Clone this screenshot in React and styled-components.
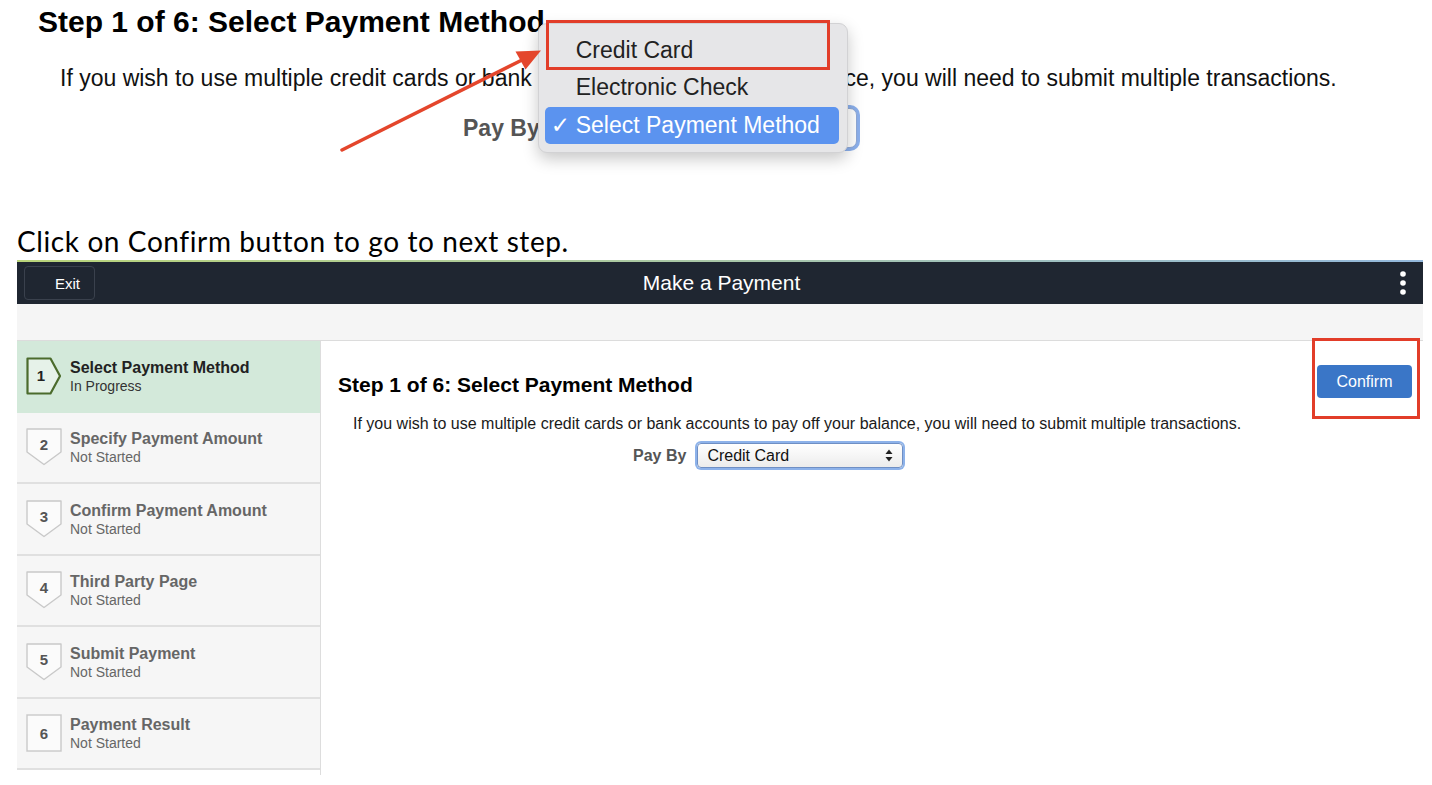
import React from 'react'
import styled, { createGlobalStyle } from 'styled-components'

const GlobalStyle = createGlobalStyle`
  html, body {
    margin: 0;
    padding: 0;
    background: #ffffff;
  }
  body {
    font-family: "Liberation Sans", Arial, sans-serif;
    color: #111;
  }
  * {
    box-sizing: border-box;
  }
`

const steps = [
  { n: 1, title: 'Select Payment Method', status: 'In Progress', kind: 'active' },
  { n: 2, title: 'Specify Payment Amount', status: 'Not Started', kind: 'down' },
  { n: 3, title: 'Confirm Payment Amount', status: 'Not Started', kind: 'down' },
  { n: 4, title: 'Third Party Page', status: 'Not Started', kind: 'down' },
  { n: 5, title: 'Submit Payment', status: 'Not Started', kind: 'down' },
  { n: 6, title: 'Payment Result', status: 'Not Started', kind: 'square' },
]

const menuItems = ['Credit Card', 'Electronic Check', 'Select Payment Method']

function BadgeShape({ kind }) {
  if (kind === 'active') {
    return (
      <svg width="36" height="38" viewBox="0 0 36 38">
        <path d="M1.5 1.5 H24.5 L34 19 L24.5 36.5 H1.5 Z" fill="#e6f2e9" stroke="#4b6b2c" strokeWidth="2.2" strokeLinejoin="round" />
      </svg>
    )
  }
  if (kind === 'down') {
    return (
      <svg width="36" height="38" viewBox="0 0 36 38">
        <path d="M1 1 H35 V24 L18 36.5 L1 24 Z" fill="#fbfbfb" stroke="#c9c9c9" strokeWidth="1.4" strokeLinejoin="round" />
      </svg>
    )
  }
  return (
    <svg width="36" height="38" viewBox="0 0 36 38">
      <rect x="1" y="1" width="34" height="36" fill="#fbfbfb" stroke="#c9c9c9" strokeWidth="1.4" />
    </svg>
  )
}

function Kebab() {
  return (
    <svg width="8" height="26" viewBox="0 0 8 26">
      <circle cx="4" cy="4" r="2.8" fill="#fff" />
      <circle cx="4" cy="13" r="2.8" fill="#fff" />
      <circle cx="4" cy="22" r="2.8" fill="#fff" />
    </svg>
  )
}

function UpDown() {
  return (
    <svg width="8" height="13" viewBox="0 0 8 13">
      <path d="M4 0.5 L7.5 5 H0.5 Z" fill="#222" />
      <path d="M4 12.5 L7.5 8 H0.5 Z" fill="#222" />
    </svg>
  )
}

function Arrow() {
  return (
    <ArrowSvg width="1432" height="224" viewBox="0 0 1432 224">
      <line x1="342" y1="150" x2="522" y2="60" stroke="#e4462c" strokeWidth="3.5" strokeLinecap="round" />
      <polygon points="541,50.5 525.5,69.5 515.5,51.5" fill="#e4462c" />
    </ArrowSvg>
  )
}

export default function App() {
  return (
    <Page>
      <GlobalStyle />
      <TopShot>
        <BigHeading>Step 1 of 6: Select Payment Method</BigHeading>
        <BigPara>
          If you wish to use multiple credit cards or bank accounts to pay off your balance, you will need to submit multiple transactions.
        </BigPara>
        <BigPayRow>
          <BigLabel>Pay By</BigLabel>
          <SelectWrap>
            <BigSelect />
            <Menu>
              {menuItems.map((item, i) => (
                <MenuItem key={item} $selected={i === 2}>
                  <Check>{i === 2 ? '✓' : ''}</Check>
                  {item}
                </MenuItem>
              ))}
              <Highlight />
            </Menu>
          </SelectWrap>
        </BigPayRow>
        <Arrow />
      </TopShot>

      <Caption>Click on Confirm button to go to next step.</Caption>

      <Shot>
        <AccentLine />
        <Header>
          <ExitButton>Exit</ExitButton>
          <HeaderTitle>Make a Payment</HeaderTitle>
          <HeaderRight>
            <Kebab />
          </HeaderRight>
        </Header>
        <Band />
        <Body>
          <Sidebar>
            {steps.map((s) => (
              <StepItem key={s.n} $active={s.kind === 'active'}>
                <Badge>
                  <BadgeShape kind={s.kind} />
                  <BadgeNum $kind={s.kind}>{s.n}</BadgeNum>
                </Badge>
                <StepText>
                  <StepTitle $active={s.kind === 'active'}>{s.title}</StepTitle>
                  <StepStatus $active={s.kind === 'active'}>{s.status}</StepStatus>
                </StepText>
              </StepItem>
            ))}
          </Sidebar>
          <Main>
            <TitleRow>
              <MainHeading>Step 1 of 6: Select Payment Method</MainHeading>
              <ConfirmWrap>
                <ConfirmButton>Confirm</ConfirmButton>
                <ConfirmMark />
              </ConfirmWrap>
            </TitleRow>
            <MainPara>
              If you wish to use multiple credit cards or bank accounts to pay off your balance, you will need to submit multiple transactions.
            </MainPara>
            <PayRow>
              <PayLabel>Pay By</PayLabel>
              <SmallSelect>
                <span>Credit Card</span>
                <UpDown />
              </SmallSelect>
            </PayRow>
          </Main>
        </Body>
      </Shot>
    </Page>
  )
}

const Page = styled.div`
  width: 1432px;
  min-height: 785px;
  overflow: hidden;
`

/* ---------- first screenshot (native select menu) ---------- */

const TopShot = styled.section`
  position: relative;
  height: 224px;
  padding-top: 5px;
`

const BigHeading = styled.h1`
  margin: 0 0 0 38px;
  font-size: 30px;
  line-height: 34px;
  font-weight: 700;
  color: #000;
`

const BigPara = styled.p`
  margin: 26px 0 0 60px;
  font-size: 23px;
  line-height: 27px;
  color: #111;
`

const BigPayRow = styled.div`
  display: flex;
  align-items: center;
  gap: 6px;
  margin-top: 16px;
  padding-left: 463px;
`

const BigLabel = styled.span`
  font-size: 23px;
  font-weight: 700;
  color: #555;
`

const SelectWrap = styled.div`
  position: relative;
`

const BigSelect = styled.div`
  width: 311px;
  height: 40px;
  border-radius: 7px;
  border: 1px solid #8fa9d6;
  box-shadow: 0 0 0 3px #8cb0ec;
  background: #fff;
`

const Menu = styled.div`
  position: absolute;
  left: -8px;
  top: -85px;
  width: 310px;
  height: 130px;
  padding: 8px 8px 8px 6px;
  background: #e6e6e8;
  border: 1px solid #d2d2d4;
  border-radius: 9px;
  box-shadow: 0 6px 16px rgba(0, 0, 0, 0.22);
  display: flex;
  flex-direction: column;
`

const MenuItem = styled.div`
  display: flex;
  align-items: center;
  height: 38.5px;
  padding-left: 6px;
  font-size: 23px;
  border-radius: 5px;
  color: ${(p) => (p.$selected ? '#fff' : '#222')};
  background: ${(p) => (p.$selected ? '#5b93ef' : 'transparent')};
`

const Check = styled.span`
  width: 25px;
  font-family: "DejaVu Sans", sans-serif;
  font-size: 23px;
`

const Highlight = styled.div`
  position: absolute;
  left: 7px;
  top: -4px;
  width: 284px;
  height: 50px;
  border: 3px solid #e23d29;
`

const ArrowSvg = styled.svg`
  position: absolute;
  left: 0;
  top: 0;
  pointer-events: none;
`

const Caption = styled.p`
  margin: 0 0 0 17px;
  font-family: Lato, "Open Sans", sans-serif;
  font-size: 28px;
  line-height: 34px;
  letter-spacing: 0.6px;
  color: #000;
`

/* ---------- second screenshot (payment page) ---------- */

const Shot = styled.section`
  margin: 2px 9px 0 17px;
`

const AccentLine = styled.div`
  height: 2px;
  background: linear-gradient(90deg, #b9d47a, #a9c7a8 50%, #93b8dc);
`

const Header = styled.header`
  display: grid;
  grid-template-columns: 1fr auto 1fr;
  align-items: center;
  height: 42px;
  padding: 0 16px 0 7px;
  background: #1f2631;
`

const ExitButton = styled.button`
  justify-self: start;
  width: 71px;
  height: 34px;
  padding: 0 0 0 30px;
  text-align: left;
  border: 1px solid #3a414d;
  border-radius: 4px;
  background: #1f2631;
  color: #fff;
  font-family: "Liberation Sans", Arial, sans-serif;
  font-size: 15px;
`

const HeaderTitle = styled.div`
  margin-left: 12px;
  color: #fff;
  font-size: 21px;
`

const HeaderRight = styled.div`
  justify-self: end;
  display: flex;
  align-items: center;
`

const Band = styled.div`
  height: 37px;
  background: #f5f5f5;
  border-bottom: 1px solid #dcdcdc;
`

const Body = styled.div`
  display: flex;
  align-items: flex-start;
`

const Sidebar = styled.nav`
  width: 304px;
  flex-shrink: 0;
  border-right: 1px solid #dddddd;
  padding-bottom: 5px;
`

const StepItem = styled.div`
  display: flex;
  align-items: center;
  gap: 8px;
  height: 71.5px;
  padding-left: 9px;
  background: ${(p) => (p.$active ? '#d3e9da' : '#f6f6f6')};
  border-bottom: 2px solid ${(p) => (p.$active ? '#d3e9da' : '#e0e0e0')};
`

const Badge = styled.div`
  display: grid;
  width: 36px;
  height: 38px;
  & > * {
    grid-area: 1 / 1;
  }
`

const BadgeNum = styled.span`
  align-self: center;
  justify-self: center;
  margin-left: ${(p) => (p.$kind === 'active' ? '-6px' : '0')};
  margin-top: ${(p) => (p.$kind === 'down' ? '-5px' : '0')};
  font-size: 15px;
  font-weight: 700;
  color: ${(p) => (p.$kind === 'active' ? '#222' : '#555')};
`

const StepText = styled.div`
  display: flex;
  flex-direction: column;
  padding-top: 1px;
`

const StepTitle = styled.div`
  font-size: 16px;
  line-height: 20px;
  font-weight: 700;
  color: ${(p) => (p.$active ? '#222' : '#666')};
`

const StepStatus = styled.div`
  font-size: 14px;
  line-height: 17px;
  color: ${(p) => (p.$active ? '#333' : '#666')};
`

const Main = styled.main`
  flex: 1;
  padding: 24px 11px 0 17px;
`

const TitleRow = styled.div`
  display: flex;
  justify-content: space-between;
  align-items: flex-start;
`

const MainHeading = styled.h2`
  margin: 7px 0 0;
  font-size: 21px;
  line-height: 26px;
  font-weight: 700;
  color: #000;
`

const ConfirmWrap = styled.div`
  position: relative;
`

const ConfirmButton = styled.button`
  width: 95px;
  height: 33px;
  border: none;
  border-radius: 4px;
  background: #3a76c7;
  color: #fff;
  font-family: "Liberation Sans", Arial, sans-serif;
  font-size: 16px;
`

const ConfirmMark = styled.div`
  position: absolute;
  left: -5px;
  top: -27px;
  width: 108px;
  height: 81px;
  border: 3px solid #e23d29;
`

const MainPara = styled.p`
  margin: 16px 0 0 15px;
  font-size: 16px;
  line-height: 20px;
  color: #1a1a1a;
`

const PayRow = styled.div`
  display: flex;
  align-items: center;
  gap: 11px;
  margin-top: 9px;
  padding-left: 295px;
`

const PayLabel = styled.span`
  font-size: 16px;
  font-weight: 700;
  color: #555;
`

const SmallSelect = styled.div`
  display: flex;
  align-items: center;
  justify-content: space-between;
  width: 206px;
  height: 25px;
  padding: 0 9px 0 9px;
  border: 1px solid #6f8fc4;
  border-radius: 4px;
  box-shadow: 0 0 0 2px #8db2ea;
  background: linear-gradient(#ffffff, #ececec);
  font-size: 16px;
  color: #111;
`
